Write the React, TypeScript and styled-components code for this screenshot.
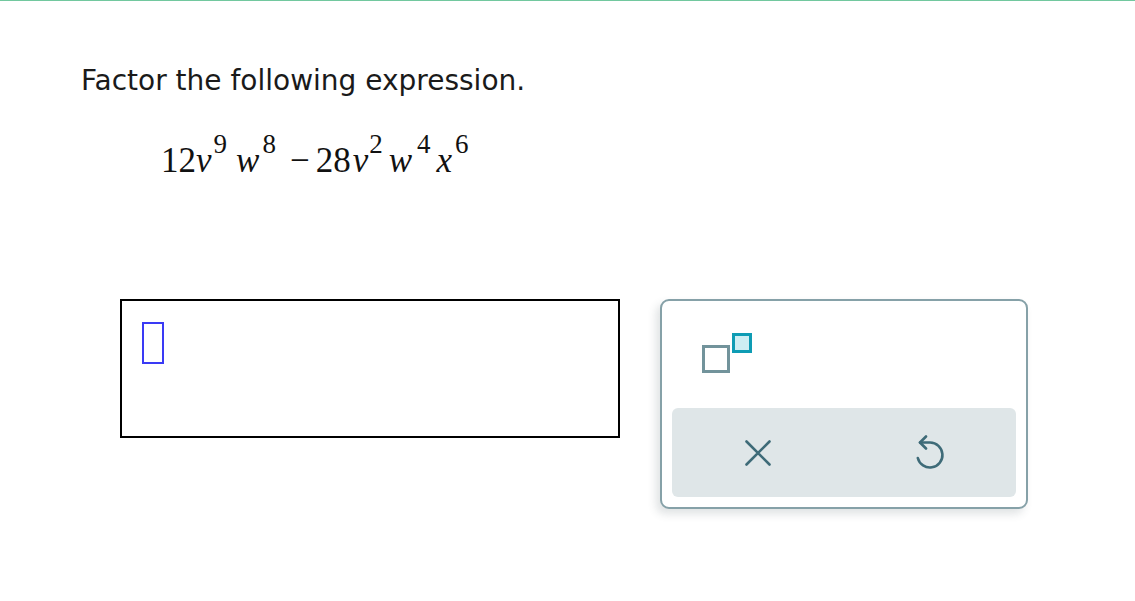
import React from "react";
import styled, { createGlobalStyle } from "styled-components";

const Global = createGlobalStyle`
  html, body { margin: 0; padding: 0; background: #fff; }
  body { font-family: "DejaVu Sans", Verdana, sans-serif; }
`;

const Page = styled.div`
  width: 1135px;
  height: 601px;
  border-top: 1px solid #72c89f;
  box-sizing: border-box;
  overflow: hidden;
`;

const Prompt = styled.div`
  margin: 63px 0 0 81px;
  font-size: 28px;
  line-height: 34px;
  color: #1a1a1a;
`;

const Expr = styled.div`
  margin: 43px 0 0 161px;
  font-family: "Liberation Serif", "Times New Roman", serif;
  font-size: 35px;
  line-height: 40px;
  color: #111;
  white-space: nowrap;
`;

const Num = styled.span<{ $ml?: number }>`
  margin-left: ${(p) => p.$ml ?? 0}px;
`;

const Var = styled.span<{ $ml?: number }>`
  font-style: italic;
  margin-left: ${(p) => p.$ml ?? 0}px;
`;

const Sup = styled.span<{ $ml?: number }>`
  font-size: 27px;
  line-height: 1;
  position: relative;
  top: -19px;
  margin-left: ${(p) => p.$ml ?? 2}px;
`;

const Row = styled.div`
  display: flex;
  align-items: flex-start;
  gap: 40px;
  margin: 118px 0 0 120px;
`;

const AnswerBox = styled.div`
  width: 500px;
  height: 139px;
  border: 2px solid #000;
  box-sizing: border-box;
  padding: 21px 0 0 20px;
`;

const Cursor = styled.div`
  width: 22px;
  height: 42px;
  border: 2px solid #3a3af5;
  box-sizing: border-box;
`;

const Panel = styled.div`
  width: 368px;
  height: 210px;
  border: 2px solid #86a1a8;
  border-radius: 9px;
  box-sizing: border-box;
  box-shadow: -4px 5px 8px rgba(60, 80, 90, 0.16);
  display: flex;
  flex-direction: column;
  padding: 0 10px 10px 10px;
  background: #fff;
`;

const Tools = styled.div`
  flex: 1;
  display: flex;
  align-items: flex-start;
  padding: 32px 0 0 30px;
`;

const SupButton = styled.div`
  display: flex;
  align-items: flex-start;
  gap: 2px;
  padding-top: 12px;
`;

const Base = styled.div`
  width: 28px;
  height: 28px;
  border: 3px solid #72939b;
  box-sizing: border-box;
`;

const Exp = styled.div`
  width: 20px;
  height: 20px;
  border: 3px solid #0e9cb4;
  background: #cdeef3;
  box-sizing: border-box;
  margin-top: -12px;
`;

const Actions = styled.div`
  height: 89px;
  background: #dfe6e8;
  border-radius: 6px;
  display: flex;
  align-items: center;
  justify-content: space-around;
`;

const IconBtn = styled.button`
  border: 0;
  background: transparent;
  padding: 0;
  width: 40px;
  height: 40px;
  display: flex;
  align-items: center;
  justify-content: center;
  color: #3e6b78;
`;

export default function App() {
  return (
    <>
      <Global />
      <Page>
        <Prompt>Factor the following expression.</Prompt>
        <Expr>
          <Num>12</Num>
          <Var>v</Var>
          <Sup>9</Sup>
          <Var $ml={9}>w</Var>
          <Sup $ml={3}>8</Sup>
          <Num $ml={14}>−</Num>
          <Num $ml={6}>28</Num>
          <Var $ml={2}>v</Var>
          <Sup $ml={1}>2</Sup>
          <Var $ml={6}>w</Var>
          <Sup $ml={5}>4</Sup>
          <Var $ml={6}>x</Var>
          <Sup $ml={3}>6</Sup>
        </Expr>
        <Row>
          <AnswerBox>
            <Cursor />
          </AnswerBox>
          <Panel>
            <Tools>
              <SupButton>
                <Base />
                <Exp />
              </SupButton>
            </Tools>
            <Actions>
              <IconBtn aria-label="clear">
                <svg width="26" height="26" viewBox="0 0 26 26" fill="none" stroke="currentColor" strokeWidth="2.6" strokeLinecap="round">
                  <path d="M1.5 1.5 L24.5 24.5 M24.5 1.5 L1.5 24.5" />
                </svg>
              </IconBtn>
              <IconBtn aria-label="undo">
                <svg width="30" height="36" viewBox="0 0 30 36" fill="none" stroke="currentColor" strokeWidth="2.6" strokeLinecap="round" strokeLinejoin="round">
                  <path d="M11 1.5 L5 7.5 L11 13.5" />
                  <path d="M5 7.5 H15 A12.5 12.5 0 1 1 2.8 23" />
                </svg>
              </IconBtn>
            </Actions>
          </Panel>
        </Row>
      </Page>
    </>
  );
}
